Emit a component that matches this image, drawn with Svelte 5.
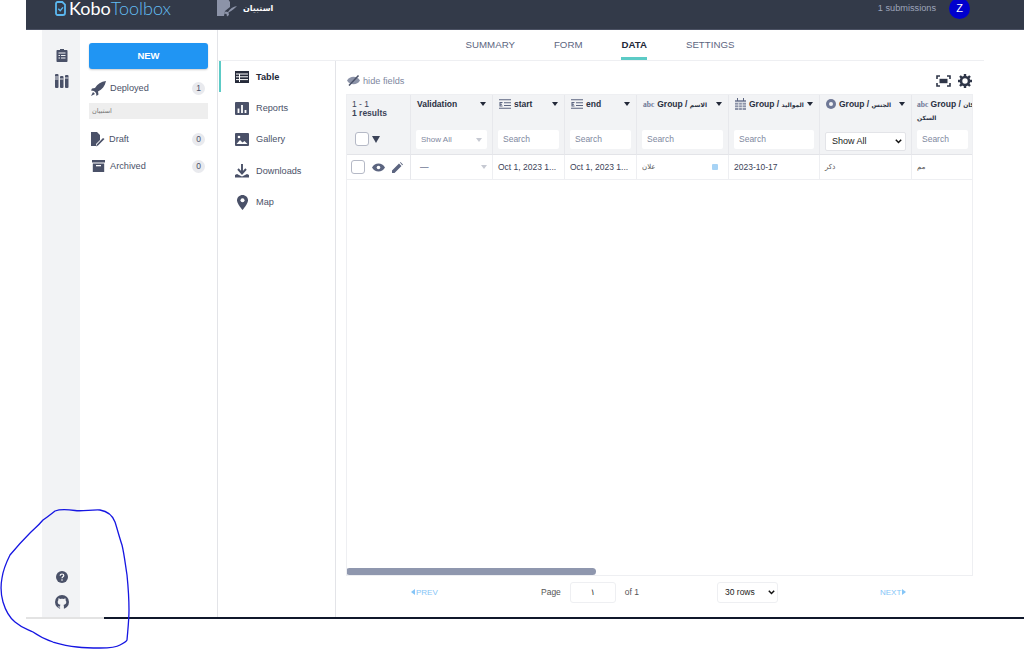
<script>
	const tabs = ["SUMMARY", "FORM", "DATA", "SETTINGS"];
	const subnav = ["Table", "Reports", "Gallery", "Downloads", "Map"];
</script>

<div class="page">
	<header class="top">
		<div class="logo">
			<svg width="11" height="15" viewBox="0 0 11 15"><path d="M2.500 1h4.800l2.700 2.700v8.300c0 1.100-.9 2-2 2H2.500c-.9 0-1.500-.8-1.500-1.700V2.700C1 1.800 1.600 1 2.500 1z" fill="none" stroke="#5bb8f0" stroke-width="1.800"/><path d="M3.300 7.800l1.900 2 2.800-3.400" fill="none" stroke="#5bb8f0" stroke-width="1.400"/></svg>
			<span class="kobo">Kobo</span><span class="toolbox">Toolbox</span>
		</div>
		<div class="form-title">
			<svg width="21" height="19" viewBox="0 0 21 19"><path d="M0 0h11l2 3v5l-5 4-1 5H0z" fill="#8c93a8"/><path d="M20 7c-4 .5-7 2.500-9 6l-2.500-.5L7 14.500l2.500.5.500 2.500 2-1.500-.5-2.500c3.500-2 7-4.500 8.500-6.500z" fill="#8c93a8"/></svg>
			<span>استبيان</span>
		</div>
		<div class="top-right">
			<span class="subs">1 submissions</span>
			<span class="avatar">Z</span>
		</div>
	</header>

	<div class="body">
		<nav class="rail">
			<div class="rail-top">
				<svg width="12" height="15" viewBox="0 0 12 14"><path d="M1.500 1.500H4V.5h4v1h2.500c.6 0 1 .4 1 1v10c0 .6-.4 1-1 1h-9c-.6 0-1-.4-1-1v-10c0-.6.4-1 1-1z" fill="#4a5168"/><path d="M2.500 4.500h7M2.500 7h1.500M5 7h4.500M2.500 9.500h1.500M5 9.500h4.500" stroke="#f2f3f5" stroke-width="1.100"/></svg>
				<svg width="14" height="14" viewBox="0 0 14 14"><g fill="#4a5168"><rect x="0" y="0" width="3.500" height="14" rx="1"/><rect x="5" y="2" width="3.500" height="12" rx="1"/><rect x="10" y="1" width="3.500" height="13" rx="1"/></g><path d="M0 3h3.500M0 5h3.500M5 5h3.500M10 4h3.500" stroke="#f2f3f5" stroke-width=".9"/></svg>
			</div>
			<div class="rail-bottom">
				<svg width="12" height="12" viewBox="0 0 12 12"><circle cx="6" cy="6" r="6" fill="#4a5168"/><path d="M4.200 4.700c0-1.100.8-1.700 1.800-1.700s1.800.6 1.800 1.500c0 1.300-1.800 1.300-1.800 2.700" fill="none" stroke="#fff" stroke-width="1.200"/><circle cx="6" cy="9" r=".8" fill="#fff"/></svg>
				<svg width="14" height="14" viewBox="0 0 14 14"><circle cx="7" cy="7" r="7" fill="#4a5168"/><path d="M3.600 3.200l1.900.8c1-.3 2-.3 3 0l1.900-.8c.3.8.3 1.400.2 2 .5.600.7 1.200.7 1.900 0 1.800-1.200 2.700-2.800 2.900.3.300.4.700.4 1.200V14H5.100v-1.600c-1 .2-1.800-.1-2.300-1.200.5.300 1.300.8 2.300.4v-.6c0-.5.100-.900.400-1.200-1.600-.2-2.800-1.100-2.800-2.900 0-.7.200-1.300.7-1.900-.1-.6-.1-1.200.2-2z" fill="#f2f3f5"/></svg>
			</div>
		</nav>

		<aside class="forms">
			<button class="new">NEW</button>
			<div class="state first">
				<svg width="15" height="15" viewBox="0 0 15 15"><path d="M15 0C10 .5 6.500 3 4 7L1 7.500 0 9.500l3 .5 2 2 .5 3 2-1.500-.5-3C11 8.500 14 5 15 0z" fill="#4a5168"/><path d="M2 11l-2 4 4-2z" fill="#4a5168"/></svg>
				<span class="state-name">Deployed</span>
				<span class="count">1</span>
			</div>
			<div class="deployed-form">استبيان</div>
			<div class="state draft">
				<svg width="14" height="15" viewBox="0 0 14 15"><path d="M0 0h6l3 3v5l-4 4v2H0z" fill="#4a5168"/><path d="M13.500 7l-6.500 6.500-2 1 .8-2L12 6z" fill="#4a5168"/></svg>
				<span class="state-name">Draft</span>
				<span class="count">0</span>
			</div>
			<div class="state archived">
				<svg width="13" height="12" viewBox="0 0 13 12"><rect width="13" height="2.500" fill="#4a5168"/><path d="M.8 3.500h11.400V12H.8z" fill="#4a5168"/><rect x="4" y="5" width="5" height="1.300" fill="#fff"/></svg>
				<span class="state-name">Archived</span>
				<span class="count">0</span>
			</div>
		</aside>

		<main class="main">
			<div class="tabs">
				{#each tabs as tab}
					<span class="tab" class:active={tab === "DATA"}>{tab}</span>
				{/each}
			</div>
			<div class="data-view">
				<ul class="subnav">
					{#each subnav as item}
						<li class:current={item === "Table"}>
							<span class="sub-icon">
								{#if item === "Table"}
									<svg width="14" height="12" viewBox="0 0 14 12"><rect width="14" height="12" fill="#262b3a"/><path d="M1 3h12M1 5.800h12M1 8.600h12M4.500 3v8" stroke="#fff" stroke-width="1"/></svg>
								{:else if item === "Reports"}
									<svg width="14" height="13" viewBox="0 0 14 13"><rect width="14" height="13" rx="1" fill="#4a5168"/><path d="M3.500 6.500V11M7 3v8M10.500 8v3" stroke="#fff" stroke-width="1.800"/></svg>
								{:else if item === "Gallery"}
									<svg width="14" height="13" viewBox="0 0 14 13"><rect width="14" height="13" rx="1" fill="#4a5168"/><path d="M1.500 11l3.500-4 2.500 2.500L9.500 8l3 3z" fill="#fff"/><circle cx="4" cy="4" r="1.300" fill="#fff"/></svg>
								{:else if item === "Downloads"}
									<svg width="14" height="14" viewBox="0 0 14 14"><path d="M7 0v8M3 5l4 4.500L11 5" fill="none" stroke="#4a5168" stroke-width="1.900"/><path d="M0 11l2-1 5 2.500L12 10l2 1v2.500H0z" fill="#4a5168"/></svg>
								{:else}
									<svg class="pin" width="11" height="15" viewBox="0 0 11 15"><path d="M5.500 0C2.500 0 0 2.300 0 5.300 0 9 5.500 15 5.500 15S11 9 11 5.300C11 2.300 8.500 0 5.500 0z" fill="#4a5168"/><circle cx="5.500" cy="5.300" r="2" fill="#fff"/></svg>
								{/if}
							</span>
							<span>{item}</span>
						</li>
					{/each}
				</ul>

				<section class="content">
					<div class="toolbar">
						<span class="hide-fields">
							<svg width="13" height="11" viewBox="0 0 13 11"><path d="M0 5.500C1.500 3 3.800 1.800 6.500 1.800S11.500 3 13 5.500c-1.500 2.500-3.800 3.700-6.500 3.700S1.500 8 0 5.500z" fill="#8c93a8"/><path d="M2 10.500L11.500.5" stroke="#4a5168" stroke-width="1.500"/></svg>
							hide fields
						</span>
						<span class="tools">
							<svg width="15" height="12" viewBox="0 0 15 12"><path d="M1 4V1h3M11 1h3v3M14 8v3h-3M4 11H1V8" fill="none" stroke="#2f3648" stroke-width="1.600"/><rect x="3.500" y="3.800" width="8" height="4.400" fill="#2f3648"/></svg>
							<svg width="14" height="14" viewBox="0 0 14 14"><circle cx="7" cy="7" r="4" fill="none" stroke="#2f3648" stroke-width="2.600"/><g stroke="#2f3648" stroke-width="2.400"><path d="M7 0v2.500M7 11.500V14M0 7h2.500M11.500 7H14M2 2l1.800 1.800M10.200 10.200L12 12M2 12l1.800-1.800M10.200 3.800L12 2"/></g></svg>
						</span>
					</div>

					<div class="table-wrap">
						<div class="grid">
							<div class="th first-col">
								<div class="results">1 - 1<br /><b>1 results</b></div>
								<div class="select-all"><span class="check"></span><span class="caret big"></span></div>
							</div>
							<div class="th">
								<div class="th-label"><span class="lbl">Validation</span><span class="caret"></span></div>
								<div class="filter fake-select"><span>Show All</span><i></i></div>
							</div>
							<div class="th">
								<div class="th-label"><svg class="type" width="12" height="10" viewBox="0 0 12 10"><path d="M0 .7h12M0 9.300h12M3.500 3.500H1v3.500h2.500M1 5.200h2M5 3.800h7M5 6.500h7" stroke="#5c6580" stroke-width="1.100" fill="none"/></svg><span class="lbl">start</span><span class="caret"></span></div>
								<div class="filter">Search</div>
							</div>
							<div class="th">
								<div class="th-label"><svg class="type" width="12" height="10" viewBox="0 0 12 10"><path d="M0 .7h12M0 9.300h12M3.500 3.500H1v3.500h2.500M1 5.200h2M5 3.800h7M5 6.500h7" stroke="#5c6580" stroke-width="1.100" fill="none"/></svg><span class="lbl">end</span><span class="caret"></span></div>
								<div class="filter">Search</div>
							</div>
							<div class="th">
								<div class="th-label"><span class="abc">abc</span><span class="lbl">Group / <span class="ar">الاسم</span></span><span class="caret"></span></div>
								<div class="filter">Search</div>
							</div>
							<div class="th">
								<div class="th-label"><svg class="type" width="11" height="12" viewBox="0 0 11 12"><path d="M0 2h11v10H0z" fill="#8c93a8"/><path d="M2.500 0v3M8.500 0v3" stroke="#5c6580"/><path d="M0 4.500h11M0 7h11M0 9.500h11M3.700 4.500V12M7.300 4.500V12" stroke="#f2f3f5" stroke-width=".7"/></svg><span class="lbl">Group / <span class="ar">المواليد</span></span><span class="caret"></span></div>
								<div class="filter">Search</div>
							</div>
							<div class="th">
								<div class="th-label"><svg class="type" width="10" height="10" viewBox="0 0 10 10"><circle cx="5" cy="5" r="5" fill="#6f7896"/><circle cx="5" cy="5" r="2" fill="#f2f3f5"/></svg><span class="lbl">Group / <span class="ar">الجنس</span></span><span class="caret"></span></div>
								<div class="filter real-select"><span>Show All</span><svg width="7" height="5" viewBox="0 0 7 5"><path d="M.8.800L3.500 3.500 6.200.8" fill="none" stroke="#111" stroke-width="1.500"/></svg></div>
							</div>
							<div class="th last">
								<div class="long-label"><span class="abc">abc</span> Group / <span class="ar">مكان السكن</span></div>
								<div class="filter">Search</div>
							</div>

							<div class="td actions">
								<span class="check"></span>
								<svg width="13" height="9" viewBox="0 0 13 9"><path d="M0 4.500C1.500 1.700 3.800.5 6.500.5s5 1.200 6.500 4c-1.500 2.800-3.800 4-6.500 4S1.500 7.300 0 4.500z" fill="#5c6580"/><circle cx="6.500" cy="4.500" r="1.800" fill="#fff"/></svg>
								<svg width="11" height="11" viewBox="0 0 11 11"><path d="M0 11V8.500L7 1.500 9.500 4 2.500 11zM8 .5l.5-.5 2.500 2.500-.8.800z" fill="#5c6580"/></svg>
							</div>
							<div class="td validation"><span class="dash">—</span><i></i></div>
							<div class="td">Oct 1, 2023 1...</div>
							<div class="td">Oct 1, 2023 1...</div>
							<div class="td name"><span class="ar small">علان</span><span class="edit-mark"></span></div>
							<div class="td">2023-10-17</div>
							<div class="td"><span class="ar small">ذكر</span></div>
							<div class="td last"><span class="ar small">مم</span></div>
						</div>
						<div class="scrollbar"></div>
					</div>

					<div class="pager">
						<span class="pg-btn prev"><i class="tri left"></i>PREV</span>
						<span class="pg-mid">
							<span>Page</span>
							<span class="pg-input">١</span>
							<span>of 1</span>
						</span>
						<span class="rows"><span>30 rows</span><svg width="7" height="5" viewBox="0 0 7 5"><path d="M.8.800L3.500 3.500 6.200.8" fill="none" stroke="#111" stroke-width="1.500"/></svg></span>
						<span class="pg-btn next">NEXT<i class="tri right"></i></span>
					</div>
				</section>
			</div>
		</main>
	</div>

	<div class="bottom-line"><span></span></div>

	<!-- hand drawn circle from the person who took the screenshot -->
	<svg class="scribble" width="140" height="149" viewBox="0 500 140 149">
		<path d="M75 510.500C68 509.500 60 509 55 511 50 515 46 518 43 520 38 526 34 529 30 533 22 541 15 549 10 555 6 563 3 571 2 578 .5 586 1 595 3 602 6 612 10 618 15 622 22 628 27 629 33 632 40 637 47 640 53 642 60 644 68 646 77 647 86 648 93 648 100 648 110 648 117 647 120 645 124 643 126 642 127 640 128 628 129 620 129 610 129 597 128 585 127 575 125 562 124 553 122 545 119 536 117 528 115 522 112 514 106 511 100 510 92 509.500 82 511.500 75 510.500" fill="none" stroke="#1616e2" stroke-width="1.300"/>
	</svg>
</div>

<style>
	:global(body) {
		margin: 0;
		background: #fff;
	}

	.page {
		position: relative;
		height: 649px;
		overflow: hidden;
		padding-left: 26px;
		box-sizing: border-box;
		font-family: "Liberation Sans", "DejaVu Sans", sans-serif;
		color: #4a5168;
		font-size: 9.200px;
	}

	svg {
		display: block;
		flex: none;
	}

	.top {
		height: 30px;
		box-sizing: border-box;
		background: #333a49;
		border-bottom: 1px solid #4b5163;
		display: flex;
		align-items: center;
		padding: 0 54px 13px 29px;
		overflow: hidden;
	}

	.logo {
		display: flex;
		align-items: center;
		width: 162px;
		font-family: Lato, sans-serif;
		font-size: 18px;
		line-height: 17px;
		padding-top: 1px;
	}

	.logo svg {
		margin-right: 3px;
	}

	.kobo {
		color: #fff;
		font-weight: 400;
	}

	.toolbox {
		color: #62bdf3;
		font-weight: 300;
	}

	.form-title {
		display: flex;
		align-items: center;
		gap: 5px;
		color: #fff;
		font-size: 8px;
		font-weight: bold;
		font-family: "Liberation Sans", "DejaVu Sans", sans-serif;
	}

	.top-right {
		margin-left: auto;
		display: flex;
		align-items: center;
		gap: 13px;
	}

	.subs {
		color: #9ea5ba;
		font-size: 9.200px;
	}

	.avatar {
		width: 21px;
		height: 21px;
		border-radius: 50%;
		background: #0000cd;
		color: #fff;
		font-size: 11px;
		display: flex;
		align-items: center;
		justify-content: center;
		flex: none;
	}

	.body {
		display: flex;
		height: 587px;
		padding-left: 16px;
	}

	.rail {
		width: 38px;
		background: #f2f3f5;
		display: flex;
		flex-direction: column;
		justify-content: space-between;
		align-items: center;
		padding: 18px 0 8px 1px;
		box-sizing: border-box;
	}

	.rail-top {
		display: flex;
		flex-direction: column;
		align-items: center;
		gap: 11px;
	}

	.rail-bottom {
		display: flex;
		flex-direction: column;
		align-items: center;
		gap: 12px;
	}

	.forms {
		width: 138px;
		box-sizing: border-box;
		border-right: 1px solid #e3e4e8;
		padding: 13px 9px 0;
	}

	.new {
		display: block;
		width: 119px;
		height: 26px;
		border: 0;
		border-radius: 3px;
		background: #2095f3;
		color: #fff;
		font: bold 9.500px "Liberation Sans", sans-serif;
		padding: 0 0 2px;
		box-shadow: 0 1px 2px rgba(0, 0, 0, 0.2);
	}

	.state {
		display: flex;
		align-items: center;
		width: 119px;
		height: 16px;
		padding-left: 2px;
		box-sizing: border-box;
	}

	.state.first {
		margin-top: 11px;
	}

	.state.draft {
		margin-top: 12px;
	}

	.state.archived {
		margin-top: 11px;
	}

	.state svg {
		margin-right: 4px;
	}

	.state.archived svg {
		margin-left: 1px;
		margin-right: 5px;
	}

	.state-name {
		flex: 1;
	}

	.count {
		width: 13px;
		height: 13px;
		border-radius: 50%;
		background: #e9eaee;
		text-align: center;
		line-height: 13px;
		font-size: 8.500px;
		margin-right: 3px;
	}

	.deployed-form {
		width: 119px;
		height: 16px;
		margin-top: 7px;
		background: #eeeeee;
		font-size: 6.500px;
		line-height: 16px;
		padding-left: 3px;
		box-sizing: border-box;
		color: #777;
		font-family: "DejaVu Sans", sans-serif;
	}

	.main {
		flex: 1;
		display: flex;
		flex-direction: column;
		min-width: 0;
	}

	.tabs {
		height: 31px;
		box-sizing: border-box;
		width: 766px;
		border-bottom: 1px solid #eeeff2;
		display: flex;
		justify-content: center;
		gap: 39px;
		font-size: 9.700px;
		color: #5c6580;
		padding-right: 2px;
	}

	.tab {
		height: 30px;
		padding: 9px 0 0;
		box-sizing: border-box;
	}

	.tab.active {
		color: #222838;
		font-weight: bold;
		border-bottom: 3px solid #5ccbc6;
	}

	.data-view {
		flex: 1;
		display: flex;
		min-height: 0;
	}

	.subnav {
		list-style: none;
		margin: 0 0 0 1px;
		padding: 0;
		width: 117px;
		box-sizing: border-box;
		border-right: 1px solid #e3e4e8;
	}

	.subnav li {
		height: 31.400px;
		display: flex;
		align-items: center;
		padding-left: 14px;
		box-sizing: border-box;
		border-left: 2px solid transparent;
		font-size: 9.200px;
	}

	.subnav li.current {
		border-left-color: #5ccbc6;
		color: #222838;
		font-weight: bold;
	}

	.sub-icon {
		width: 21px;
		display: flex;
		justify-content: flex-start;
	}

	.pin {
		margin-left: 2px;
	}

	.content {
		flex: 1;
		padding-left: 10px;
		min-width: 0;
	}

	.toolbar {
		height: 33px;
		width: 626px;
		display: flex;
		justify-content: space-between;
		align-items: center;
		padding-top: 6px;
		box-sizing: border-box;
	}

	.hide-fields {
		display: flex;
		align-items: center;
		gap: 3px;
		color: #8088a0;
		font-size: 9.200px;
		padding-left: 1px;
	}

	.tools {
		display: flex;
		align-items: center;
		gap: 7px;
	}

	.table-wrap {
		position: relative;
		width: 627px;
		height: 482px;
		box-sizing: border-box;
		border: 1px solid #eeeff2;
		overflow: hidden;
	}

	.grid {
		display: grid;
		grid-template-columns: 64px 82px 72px 72px 92px 91px 92px 61px;
		grid-template-rows: 60px 25px;
		width: 627px;
	}

	.th {
		background: #f2f3f5;
		border-right: 1px solid #e7e8ec;
		border-bottom: 1px solid #e3e4e8;
		padding: 3px 5px 0 5px;
		box-sizing: border-box;
		display: flex;
		flex-direction: column;
		color: #2a3042;
		min-width: 0;
	}

	.th.last {
		border-right: 0;
		overflow: hidden;
	}

	.th-label {
		display: flex;
		align-items: center;
		gap: 3px;
		height: 12px;
		margin-left: 1px;
		font-size: 8.500px;
		font-weight: bold;
		white-space: nowrap;
	}

	.long-label {
		width: 80px;
		height: 24px;
		font-size: 8.500px;
		line-height: 13px;
		font-weight: bold;
	}

	.type {
		flex: none;
	}

	.lbl {
		flex: 1;
		min-width: 0;
	}

	.ar {
		font-family: "DejaVu Sans", sans-serif;
		font-size: 6px;
	}

	.ar.small {
		font-size: 7px;
		color: #555;
	}

	.abc {
		color: #6f7896;
		font-size: 7.500px;
		font-weight: bold;
		font-family: "Liberation Serif", serif;
	}

	.caret {
		width: 0;
		height: 0;
		border-left: 3.500px solid transparent;
		border-right: 3.500px solid transparent;
		border-top: 4.500px solid #222838;
		flex: none;
		margin-right: 1px;
	}

	.caret.big {
		border-left-width: 4px;
		border-right-width: 4px;
		border-top: 7px solid #3c4358;
	}

	.filter {
		margin-top: auto;
		margin-bottom: 5px;
		height: 19px;
		border-radius: 2px;
		background: #fff;
		color: #8088a0;
		font-size: 8.500px;
		line-height: 19px;
		padding-left: 5px;
		box-sizing: border-box;
		font-weight: normal;
	}

	.fake-select {
		display: flex;
		align-items: center;
		justify-content: space-between;
		padding: 0 5px 0 5px;
		font-size: 8px;
	}

	.fake-select i,
	.validation i {
		width: 0;
		height: 0;
		border-left: 3.500px solid transparent;
		border-right: 3.500px solid transparent;
		border-top: 4px solid #c6c9d2;
	}

	.real-select {
		display: flex;
		align-items: center;
		justify-content: space-between;
		border: 1px solid #e3e4e8;
		color: #222;
		padding: 0 3px 0 6px;
		margin-bottom: 3px;
		height: 19px;
		font-size: 9px;
	}

	.first-col {
		padding: 5px 0 0 5px;
	}

	.results {
		font-size: 8.500px;
		line-height: 9px;
		color: #3c4358;
	}

	.select-all {
		margin-top: auto;
		margin-bottom: 8px;
		display: flex;
		align-items: center;
		gap: 3px;
		padding-left: 3px;
	}

	.check {
		width: 14px;
		height: 14px;
		border: 1px solid #b5b9c6;
		border-radius: 3px;
		box-sizing: border-box;
		background: #fff;
		display: block;
		flex: none;
	}

	.td {
		border-right: 1px solid #eeeff2;
		border-bottom: 1px solid #eeeff2;
		display: flex;
		align-items: center;
		padding-left: 5px;
		box-sizing: border-box;
		color: #3c4358;
		font-size: 8.500px;
		white-space: nowrap;
		overflow: hidden;
	}

	.td.last {
		border-right: 0;
	}

	.actions {
		gap: 7px;
		padding-left: 4px;
		background: #fff;
		border-right: 1px solid #e7e8ec;
	}

	.validation {
		justify-content: space-between;
		padding: 0 5px 0 9px;
	}

	.dash {
		color: #8c93a8;
		font-weight: bold;
	}

	.name {
		justify-content: space-between;
		padding-right: 10px;
	}

	.edit-mark {
		width: 6px;
		height: 6px;
		background: #a7d3f5;
		border-radius: 1px;
	}

	.scrollbar {
		position: absolute;
		left: -1px;
		bottom: 0;
		width: 250px;
		height: 7px;
		border-radius: 3.500px;
		background: #8f97ae;
	}

	.pager {
		display: grid;
		grid-template-columns: 195px 176px 126px 129px;
		width: 626px;
		align-items: center;
		height: 32px;
		font-size: 8.500px;
	}

	.pg-btn {
		display: flex;
		align-items: center;
		gap: 1px;
		color: #85c5f7;
		font-size: 8px;
	}

	.prev {
		padding-left: 65px;
	}

	.next {
		padding-left: 37px;
	}

	.tri {
		width: 0;
		height: 0;
		border-top: 3px solid transparent;
		border-bottom: 3px solid transparent;
	}

	.tri.left {
		border-right: 4px solid #85c5f7;
	}

	.tri.right {
		border-left: 4px solid #85c5f7;
	}

	.pg-mid {
		display: flex;
		align-items: center;
		gap: 9px;
		color: #555;
	}

	.pg-input {
		width: 46px;
		height: 21px;
		border: 1px solid #eeeff2;
		border-radius: 3px;
		box-sizing: border-box;
		text-align: center;
		line-height: 19px;
		color: #333;
	}

	.rows {
		width: 61px;
		height: 21px;
		border: 1px solid #eeeff2;
		border-radius: 3px;
		box-sizing: border-box;
		display: flex;
		align-items: center;
		justify-content: space-between;
		padding: 0 2px 0 7px;
		color: #222;
	}

	.bottom-line {
		height: 2px;
		background: #e3e3e3;
		position: relative;
	}

	.bottom-line span {
		display: block;
		height: 1.500px;
		margin-left: 78px;
		background: #10182b;
	}

	.scribble {
		position: absolute;
		left: 0;
		top: 500px;
	}
</style>
